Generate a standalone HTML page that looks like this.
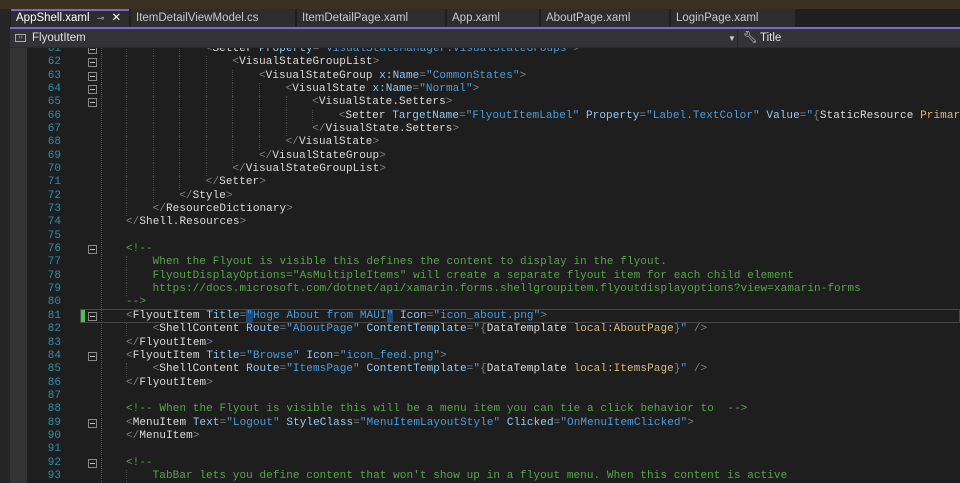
<!DOCTYPE html>
<html><head><meta charset="utf-8"><style>
*{margin:0;padding:0;box-sizing:border-box}
body{width:960px;height:483px;overflow:hidden;background:#1e1e1e;font-family:"Liberation Sans",sans-serif;position:relative}
.top{position:absolute;left:0;top:0;width:960px;height:9px;background:#3b3121}
.tabbar{position:absolute;left:0;top:9px;width:960px;height:18px;background:#1f1f1f}
.tab{position:absolute;top:0;height:18px;background:#2d2d2d;color:#c8c8c8;font-size:11.5px;line-height:18px;padding-left:5px}
.purple{position:absolute;left:0;top:27px;width:960px;height:2px;background:#7b68c8}
.nav{position:absolute;left:10px;top:29px;width:950px;height:19px;background:#333337;border-bottom:1px solid #2a2a2a;color:#e0e0e0;font-size:11.5px;line-height:19px}
.strip{position:absolute;left:0;top:9px;width:10px;height:474px;background:#252526}
.gcol{position:absolute;left:10px;top:48px;width:17px;height:435px;background:#333333}
.code{position:absolute;left:0;top:48px;width:960px;height:435px;overflow:hidden}
.ln{position:absolute;left:0;height:13.35px;width:960px;font-family:"Liberation Mono",monospace;font-size:11px;line-height:13.35px;white-space:pre}
.num{position:absolute;left:27px;width:34px;text-align:right;color:#2b91af}
.txt{position:absolute;left:126px;color:#d4d4d4;letter-spacing:0.08px}
.i{display:inline-block;width:26.6px;height:13.35px;vertical-align:top;border-left:1px dotted #4a4a4a}
.b{color:#808080}.a{color:#92caf4}.v{color:#4a9dde}.c{color:#57a64a}.t{color:#d7ba7d}.e{color:#dcdcdc}
.fold{position:absolute;left:88px;width:9px;height:9px;border:1px solid #8a8a8a;top:2px}
.fold:after{content:"";position:absolute;left:1px;top:3px;width:5px;height:1px;background:#c0c0c0}
.gl{position:absolute;left:101px;top:0;height:435px;border-left:1px dotted #555}
</style></head><body>
<div class="top"></div>
<div class="tabbar">
<div class="tab" style="left:11px;width:118px;background:#2d2d30;color:#fff;border-top:2px solid #7b68c8;line-height:15px">AppShell.xaml <span style="font-size:9px;color:#bbb;margin-left:4px">⊸</span> <span style="margin-left:4px">✕</span></div>
<div class="tab" style="left:131px;width:164px">ItemDetailViewModel.cs</div>
<div class="tab" style="left:297px;width:148px">ItemDetailPage.xaml</div>
<div class="tab" style="left:447px;width:92px">App.xaml</div>
<div class="tab" style="left:541px;width:128px">AboutPage.xaml</div>
<div class="tab" style="left:671px;width:124px">LoginPage.xaml</div>
</div>
<div class="purple"></div>
<div class="strip"></div>
<div class="nav"><span style="position:absolute;left:5px;top:5px;width:11px;height:8px;border:1px solid #aaa;font-size:6px;line-height:6px;color:#aaa;text-align:center">‹›</span><span style="position:absolute;left:22px">FlyoutItem</span><span style="position:absolute;left:718px;font-size:8px;color:#ccc">▼</span><span style="position:absolute;left:727px;top:0;width:1px;height:19px;background:#252526"></span><span style="position:absolute;left:733px;color:#ddd">🔧︎</span><span style="position:absolute;left:750px">Title</span></div>
<div class="gcol"></div>
<div class="code">
<div class="gl"></div>
<div style="position:absolute;left:80px;top:261px;width:880px;height:14px;border:1px solid #464646"></div>
<div style="position:absolute;left:81px;top:262px;width:4px;height:12px;background:#4ec04e"></div>
</div>
<div class="code" id="c"></div>
<script>
const L=[
[61,3,'<span class="b">&lt;</span><span class="e">Setter</span> <span class="a">Property</span><span class="b">=</span><span class="v">"VisualStateManager.VisualStateGroups"</span><span class="b">&gt;</span>',1],
[62,4,'<span class="b">&lt;</span><span class="e">VisualStateGroupList</span><span class="b">&gt;</span>',1],
[63,5,'<span class="b">&lt;</span><span class="e">VisualStateGroup</span> <span class="a">x:Name</span><span class="b">=</span><span class="v">"CommonStates"</span><span class="b">&gt;</span>',1],
[64,6,'<span class="b">&lt;</span><span class="e">VisualState</span> <span class="a">x:Name</span><span class="b">=</span><span class="v">"Normal"</span><span class="b">&gt;</span>',1],
[65,7,'<span class="b">&lt;</span><span class="e">VisualState.Setters</span><span class="b">&gt;</span>',1],
[66,8,'<span class="b">&lt;</span><span class="e">Setter</span> <span class="a">TargetName</span><span class="b">=</span><span class="v">"FlyoutItemLabel"</span> <span class="a">Property</span><span class="b">=</span><span class="v">"Label.TextColor"</span> <span class="a">Value</span><span class="b">=</span><span class="v">"</span><span class="b">{</span><span class="e">StaticResource</span> <span class="t">Primary</span><span class="b">}</span><span class="v">"</span> <span class="b">/&gt;</span>'],
[67,7,'<span class="b">&lt;/</span><span class="e">VisualState.Setters</span><span class="b">&gt;</span>'],
[68,6,'<span class="b">&lt;/</span><span class="e">VisualState</span><span class="b">&gt;</span>'],
[69,5,'<span class="b">&lt;/</span><span class="e">VisualStateGroup</span><span class="b">&gt;</span>'],
[70,4,'<span class="b">&lt;/</span><span class="e">VisualStateGroupList</span><span class="b">&gt;</span>'],
[71,3,'<span class="b">&lt;/</span><span class="e">Setter</span><span class="b">&gt;</span>'],
[72,2,'<span class="b">&lt;/</span><span class="e">Style</span><span class="b">&gt;</span>'],
[73,1,'<span class="b">&lt;/</span><span class="e">ResourceDictionary</span><span class="b">&gt;</span>'],
[74,0,'<span class="b">&lt;/</span><span class="e">Shell.Resources</span><span class="b">&gt;</span>'],
[75,0,''],
[76,0,'<span class="c">&lt;!--</span>',1],
[77,1,'<span class="c">When the Flyout is visible this defines the content to display in the flyout.</span>'],
[78,1,'<span class="c">FlyoutDisplayOptions="AsMultipleItems" will create a separate flyout item for each child element</span>'],
[79,1,'<span class="c">https://docs.microsoft.com/dotnet/api/xamarin.forms.shellgroupitem.flyoutdisplayoptions?view=xamarin-forms</span>'],
[80,0,'<span class="c">--&gt;</span>'],
[81,0,'<span class="b">&lt;</span><span class="e">FlyoutItem</span> <span class="a">Title</span><span class="b">=</span><span class="v"><span style="background:#1c4a7a">"</span>Hoge About from MAUI<span style="background:#1c4a7a">"</span></span> <span class="a">Icon</span><span class="b">=</span><span class="v">"icon_about.png"</span><span class="b">&gt;</span>',1],
[82,1,'<span class="b">&lt;</span><span class="e">ShellContent</span> <span class="a">Route</span><span class="b">=</span><span class="v">"AboutPage"</span> <span class="a">ContentTemplate</span><span class="b">=</span><span class="v">"</span><span class="b">{</span><span class="e">DataTemplate</span> <span class="t">local:AboutPage</span><span class="b">}</span><span class="v">"</span> <span class="b">/&gt;</span>'],
[83,0,'<span class="b">&lt;/</span><span class="e">FlyoutItem</span><span class="b">&gt;</span>'],
[84,0,'<span class="b">&lt;</span><span class="e">FlyoutItem</span> <span class="a">Title</span><span class="b">=</span><span class="v">"Browse"</span> <span class="a">Icon</span><span class="b">=</span><span class="v">"icon_feed.png"</span><span class="b">&gt;</span>',1],
[85,1,'<span class="b">&lt;</span><span class="e">ShellContent</span> <span class="a">Route</span><span class="b">=</span><span class="v">"ItemsPage"</span> <span class="a">ContentTemplate</span><span class="b">=</span><span class="v">"</span><span class="b">{</span><span class="e">DataTemplate</span> <span class="t">local:ItemsPage</span><span class="b">}</span><span class="v">"</span> <span class="b">/&gt;</span>'],
[86,0,'<span class="b">&lt;/</span><span class="e">FlyoutItem</span><span class="b">&gt;</span>'],
[87,0,''],
[88,0,'<span class="c">&lt;!-- When the Flyout is visible this will be a menu item you can tie a click behavior to  --&gt;</span>'],
[89,0,'<span class="b">&lt;</span><span class="e">MenuItem</span> <span class="a">Text</span><span class="b">=</span><span class="v">"Logout"</span> <span class="a">StyleClass</span><span class="b">=</span><span class="v">"MenuItemLayoutStyle"</span> <span class="a">Clicked</span><span class="b">=</span><span class="v">"OnMenuItemClicked"</span><span class="b">&gt;</span>',1],
[90,0,'<span class="b">&lt;/</span><span class="e">MenuItem</span><span class="b">&gt;</span>'],
[91,0,''],
[92,0,'<span class="c">&lt;!--</span>',1],
[93,1,'<span class="c">TabBar lets you define content that won\'t show up in a flyout menu. When this content is active</span>']
];
let h='';
L.forEach(([n,ind,s,f])=>{
 const top=-5.2+(n-61)*13.35;
 let g='';for(let k=0;k<ind;k++)g+='<span class="i"></span>';
 h+=`<div class="ln" style="top:${top}px"><span class="num">${n}</span>${f?'<span class="fold"></span>':''}<span class="txt">${g}${s}</span></div>`;
});
document.getElementById('c').innerHTML=h;
</script>
</body></html>
